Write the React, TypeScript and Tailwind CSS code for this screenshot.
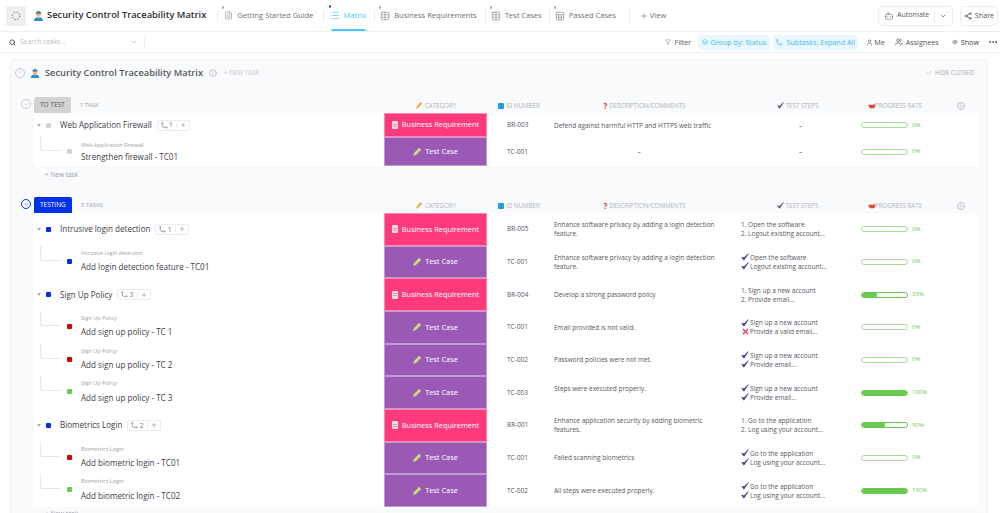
import { ChevronDown, Eye, Filter, Info, Layers, List, MoreHorizontal, Plus, Search, Share2, Sheet, FileText, Table, User, Users, Bot, Check, X } from "lucide-react";

type Row = {
  kind: "br" | "tc";
  name: string;
  parent?: string;
  dot: string;
  subs?: number;
  id: string;
  desc: string;
  descUp?: boolean;
  steps?: string[];
  marks?: ("ok" | "no")[];
  pct: number;
};

const toTest: Row[] = [
  { kind: "br", name: "Web Application Firewall", dot: "bg-[#d3d3d3]", subs: 1, id: "BR-003", desc: "Defend against harmful HTTP and HTTPS web traffic", pct: 0 },
  { kind: "tc", name: "Strengthen firewall - TC01", parent: "Web Application Firewall", dot: "bg-[#d3d3d3]", id: "TC-001", desc: "", pct: 0 },
];

const testing: Row[] = [
  { kind: "br", name: "Intrusive login detection", dot: "bg-[#0231e8]", subs: 1, id: "BR-005", desc: "Enhance software privacy by adding a login detection feature.", steps: ["1. Open the software", "2. Logout existing account..."], pct: 0 },
  { kind: "tc", name: "Add login detection feature - TC01", parent: "Intrusive login detection", dot: "bg-[#0231e8]", id: "TC-001", desc: "Enhance software privacy by adding a login detection feature.", steps: ["Open the software", "Logout existing account..."], marks: ["ok", "ok"], pct: 0 },
  { kind: "br", name: "Sign Up Policy", dot: "bg-[#0231e8]", subs: 3, id: "BR-004", desc: "Develop a strong password policy", steps: ["1. Sign up a new account", "2. Provide email..."], pct: 33 },
  { kind: "tc", name: "Add sign up policy - TC 1", parent: "Sign Up Policy", dot: "bg-[#d40000]", id: "TC-001", desc: "Email provided is not valid.", steps: ["Sign up a new account", "Provide a valid email..."], marks: ["ok", "no"], pct: 0 },
  { kind: "tc", name: "Add sign up policy - TC 2", parent: "Sign Up Policy", dot: "bg-[#d40000]", id: "TC-002", desc: "Password policies were not met.", steps: ["Sign up a new account", "Provide email..."], marks: ["ok", "ok"], pct: 0 },
  { kind: "tc", name: "Add sign up policy - TC 3", parent: "Sign Up Policy", dot: "bg-[#6bc950]", id: "TC-003", desc: "Steps were executed properly.", descUp: true, steps: ["Sign up a new account", "Provide email..."], marks: ["ok", "ok"], pct: 100 },
  { kind: "br", name: "Biometrics Login", dot: "bg-[#0231e8]", subs: 2, id: "BR-001", desc: "Enhance application security by adding biometric features.", steps: ["1. Go to the application", "2. Log using your account..."], pct: 50 },
  { kind: "tc", name: "Add biometric login - TC01", parent: "Biometrics Login", dot: "bg-[#d40000]", id: "TC-001", desc: "Failed scanning biometrics", steps: ["Go to the application", "Log using your account..."], marks: ["ok", "ok"], pct: 0 },
  { kind: "tc", name: "Add biometric login - TC02", parent: "Biometrics Login", dot: "bg-[#6bc950]", id: "TC-002", desc: "All steps were executed properly.", steps: ["Go to the application", "Log using your account..."], marks: ["ok", "ok"], pct: 100 },
];

function Guard({ size = 12 }: { size?: number }) {
  return (
    <svg width={size} height={size} viewBox="0 0 12 12">
      <path d="M1 12c0-3 2-4.500 5-4.500s5 1.500 5 4.500z" fill="#2a8fd0" />
      <circle cx="6" cy="5" r="2.600" fill="#f4b982" />
      <path d="M2.800 3.200 6 .6l3.200 2.600-.6 1H3.400z" fill="#22699f" />
      <rect x="5.300" y="1.800" width="1.400" height="1" fill="#ffcc4d" />
      <rect x="4.500" y="7.500" width="3" height="1.200" fill="#f4b982" />
    </svg>
  );
}

function SubIcon({ size = 7, className }: { size?: number; className?: string }) {
  return (
    <svg width={size} height={size} viewBox="0 0 8 8" fill="none" stroke="currentColor" strokeWidth="0.800" className={className}>
      <circle cx="1.500" cy="1.200" r="0.800" />
      <path d="M1.500 2v2.200a2 2 0 0 0 2 2H5" />
      <circle cx="6.200" cy="6.200" r="0.900" />
    </svg>
  );
}

function Tab({ icon, label, active }: { icon: React.ReactNode; label: string; active?: boolean }) {
  return (
    <div className={`relative flex h-full items-center gap-[2px] ${active ? "text-[#49ccf9]" : "text-[#6b6f76]"}`}>
      <span className="relative flex w-[14px] justify-center">
        <span className={`absolute top-[-5px] left-[1px] h-[3px] w-[2px] rounded-[1px] ${active ? "bg-[#1b6fd1]" : "bg-[#a9adb4]"}`} />
        {icon}
      </span>
      <span className="text-[7.550px] whitespace-nowrap">{label}</span>
      {active && <span className="absolute bottom-0 left-[3px] right-0 h-[2px] rounded-t bg-[#49ccf9]" />}
    </div>
  );
}

function Sep() {
  return <span className="block h-[12px] w-px bg-[#e9ebf0]" />;
}

function TopBar() {
  return (
    <div className="flex h-[32px] items-center border-b border-[#eceef1] bg-white pl-[6px] pr-[2px]">
      <div className="flex h-[20px] w-[20px] items-center justify-center rounded-[3px] bg-[#eeeeee]">
        <svg width="10" height="10" viewBox="0 0 10 10" fill="none">
          <circle cx="5" cy="5" r="3.800" stroke="#666" strokeWidth="0.800" strokeDasharray="1.600 1.400" />
        </svg>
      </div>
      <span className="ml-[7px]"><Guard size={11} /></span>
      <span className="ml-[3px] text-[9.350px] font-semibold whitespace-nowrap text-[#2a2e34]">Security Control Traceability Matrix</span>
      <div className="ml-[11px] flex h-full items-center"><Sep /></div>
      <div className="ml-[3px] flex h-full items-center">
        <Tab icon={<FileText size={9} strokeWidth={1.200} />} label="Getting Started Guide" />
        <div className="ml-[9px] mr-[4px]"><Sep /></div>
        <Tab active icon={<List size={11} strokeWidth={1.500} />} label="Matrix" />
        <div className="ml-[8px] mr-[3px]"><Sep /></div>
        <Tab icon={<Table size={10} strokeWidth={1.200} />} label="Business Requirements" />
        <div className="ml-[8px] mr-[3px]"><Sep /></div>
        <Tab icon={<Table size={10} strokeWidth={1.200} />} label="Test Cases" />
        <div className="ml-[7px] mr-[3px]"><Sep /></div>
        <Tab icon={<Sheet size={10} strokeWidth={1.200} />} label="Passed Cases" />
        <div className="ml-[13px] mr-[10px]"><Sep /></div>
        <Plus size={8} strokeWidth={1.500} className="text-[#6b6f76]" />
        <span className="ml-[2px] text-[7.550px] text-[#6b6f76]">View</span>
      </div>
      <div className="ml-auto flex items-center gap-[7px]">
        <div className="flex h-[20px] w-[75px] items-center rounded-[5px] border border-[#e9ebf0] pl-[5px] text-[#53575e]">
          <Bot size={10} strokeWidth={1.200} />
          <span className="ml-[3px] text-[7px]">Automate</span>
          <span className="ml-[5px] h-[12px] w-px bg-[#e9ebf0]" />
          <ChevronDown size={8} className="ml-[4px]" />
        </div>
        <div className="flex h-[20px] w-[38px] items-center justify-center gap-[3px] rounded-[5px] border border-[#e9ebf0] text-[#53575e]">
          <Share2 size={8} />
          <span className="text-[7.200px]">Share</span>
        </div>
      </div>
    </div>
  );
}

function Toolbar() {
  return (
    <div className="flex h-[21px] items-center border-b border-[#eceef1] bg-white pl-[9px] pr-[2px] text-[7.200px] text-[#53575e]">
      <Search size={7} strokeWidth={2.500} className="text-[#333]" />
      <span className="ml-[4px] w-[110px] text-[6.900px] text-[#b9bec7]">Search tasks...</span>
      <ChevronDown size={8} className="text-[#9a9fa8]" />
      <span className="ml-[6px] h-[10px] w-px bg-[#e9ebf0]" />
      <div className="ml-auto flex items-center">
        <Filter size={6} className="text-[#888]" />
        <span className="ml-[3px]">Filter</span>
        <div className="ml-[7px] flex h-[15px] w-[72px] items-center justify-center gap-[2px] rounded-[3px] bg-[#e8f8fe] text-[#49b9e9]">
          <Layers size={6} />
          <span className="whitespace-nowrap">Group by: Status</span>
        </div>
        <div className="ml-[3px] flex h-[15px] w-[85px] items-center justify-center gap-[3px] rounded-[3px] bg-[#e8f8fe] text-[#49b9e9]">
          <SubIcon size={7} />
          <span className="whitespace-nowrap">Subtasks: Expand All</span>
        </div>
        <User size={7} className="ml-[8px]" />
        <span className="ml-[1px]">Me</span>
        <span className="mx-[4px] text-[#c5c8ce]">·</span>
        <Users size={8} />
        <span className="ml-[3px]">Assignees</span>
        <Eye size={6} className="ml-[13px]" />
        <span className="ml-[3px] text-[#444]">Show</span>
        <MoreHorizontal size={10} className="ml-[9px] text-[#333]" />
      </div>
    </div>
  );
}

function Circle({ blue }: { blue?: boolean }) {
  return (
    <span className={`flex h-[10px] w-[10px] items-center justify-center rounded-full border ${blue ? "border-[#0231e8] text-[#0231e8]" : "border-[#c5c8ce] text-[#b0b4bb]"}`}>
      <ChevronDown size={7} strokeWidth={1.500} />
    </span>
  );
}

function CheckMark({ size = 8 }: { size?: number }) {
  return (
    <svg width={size} height={size} viewBox="0 0 8 8">
      <path d="M.8 4.300 2.900 7.200 7.300.6 3 4.800z" fill="#4b3b8f" stroke="#4b3b8f" strokeWidth="0.700" strokeLinejoin="round" />
    </svg>
  );
}

function HeadIcon({ which }: { which: "cat" | "id" | "q" | "check" | "rate" }) {
  if (which === "cat") return <svg width="7" height="7" viewBox="0 0 8 8"><path d="M5 0 7 2 3 6 0 8l1-3z" fill="#f2a33a" /></svg>;
  if (which === "id") return <span className="h-[6px] w-[6px] rounded-[1px] bg-[#1f9be0]" />;
  if (which === "q") return <span className="text-[8px] leading-none font-bold text-[#d9342b]">?</span>;
  if (which === "check") return <CheckMark size={7} />;
  return <svg width="7" height="6" viewBox="0 0 8 7"><path d="M0 2h6l2-1v3L7 6H2z" fill="#e2453c" /></svg>;
}

function GroupHeader({ label, count, badge, blue }: { label: string; count: string; badge: string; blue?: boolean }) {
  return (
    <div className="grid h-[18px] grid-cols-[350px_103px_67px_187px_120px_117px] items-center pt-[2px] text-[6.200px] text-[#aeb3bb] uppercase">
      <div className="relative flex h-[16px] items-center">
        <span className="absolute left-[-13px] top-[2px]"><Circle blue={blue} /></span>
        <span className={`flex h-[16px] items-center rounded-t-[2px] px-[6px] text-[6.500px] ${badge}`}>{label}</span>
        <span className="ml-[9px] text-[6px] text-[#9a9fa8]">{count}</span>
      </div>
      <div className="flex translate-y-px items-center justify-center gap-[2px] pl-[1px]"><HeadIcon which="cat" />Category</div>
      <div className="flex translate-y-px items-center gap-[2px] pl-[11px] whitespace-nowrap"><HeadIcon which="id" />ID Number</div>
      <div className="flex translate-y-px items-center justify-center gap-[2px] whitespace-nowrap pr-[6px]"><HeadIcon which="q" />Description/Comments</div>
      <div className="flex translate-y-px items-center justify-center gap-[2px] whitespace-nowrap pr-[7px]"><HeadIcon which="check" />Test Steps</div>
      <div className="flex translate-y-px items-center whitespace-nowrap pl-[7px]"><HeadIcon which="rate" />Progress Rate
        <span className="ml-[35px] flex h-[8px] w-[8px] shrink-0 items-center justify-center rounded-full border border-[#b9bec7] text-[#b9bec7]"><Plus size={6} /></span>
      </div>
    </div>
  );
}

function TaskRow({ row, tall, short }: { row: Row; tall?: boolean; short?: boolean }) {
  const isBr = row.kind === "br";
  const h = short ? "h-[24px]" : tall ? "h-[29px]" : "h-[32.670px]";
  return (
    <div className={`grid grid-cols-[350px_103px_67px_187px_120px_117px] items-center bg-white text-[#53575e] ${h} ${isBr ? "shadow-[0_1px_2px_rgba(0,0,0,0.04)]" : ""}`}>
      {isBr ? (
        <div className="flex items-center pl-[3px]">
          <span className="h-0 w-0 border-x-[2.500px] border-t-[3px] border-x-transparent border-t-[#a9adb4]" />
          <span className={`ml-[5px] h-[5px] w-[5px] rounded-[1px] ${row.dot}`} />
          <span className="ml-[9px] text-[8.050px] whitespace-nowrap text-[#3c4046]">{row.name}</span>
          <span className="ml-[5px] flex h-[11px] items-center rounded-[2px] border border-[#e9ebf0] px-[3px] text-[7.500px] text-[#7c828d]">
            <SubIcon size={7} />
            <span className="ml-[1px]">{row.subs}</span>
            <span className="mx-[3px] h-[7px] w-px bg-[#e9ebf0]" />
            <Plus size={6} />
          </span>
        </div>
      ) : (
        <div className="flex h-full items-start">
          <span className={`ml-[6px] w-[21px] rounded-bl-[3px] border-b border-l border-[#e4e6ea] ${tall ? "h-[14px]" : "h-[15px]"}`} />
          <span className={`ml-[6px] h-[5px] w-[5px] rounded-[1px] ${row.dot} ${tall ? "mt-[12px]" : "mt-[13px]"}`} />
          <div className={`ml-[9px] flex flex-col ${tall ? "pt-[4px]" : "pt-[3px]"}`}>
            <span className="text-[5.500px] leading-[8px] whitespace-nowrap text-[#9a9fa8]">{row.parent}</span>
            <span className={`text-[8.100px] leading-[11px] whitespace-nowrap text-[#3c4046] ${tall ? "mt-[2px]" : "mt-[4.500px]"}`}>{row.name}</span>
          </div>
        </div>
      )}
      <div className={`flex h-full items-center justify-center gap-[4px] border border-white/40 text-[7.400px] text-white ${isBr ? "bg-[#fd3b7c]" : "bg-[#9b59b6]"}`}>
        {isBr ? (
          <span className="flex h-[8px] w-[6px] flex-col justify-center gap-px rounded-[1px] bg-[#f3dbe3] px-px">
            <span className="h-px bg-[#c9a3b3]" />
            <span className="h-px bg-[#c9a3b3]" />
          </span>
        ) : (
          <svg width="8" height="8" viewBox="0 0 8 8"><path d="M6 0 8 2 3 7 0 8l1-3z" fill="#c4e36a" /><path d="M6 0 8 2 7 3 5 1z" fill="#f0c98a" /></svg>
        )}
        <span className="whitespace-nowrap">{isBr ? "Business Requirement" : "Test Case"}</span>
      </div>
      <div className="pl-[20px] text-[6.500px]">{row.id}</div>
      <div className={`pr-[14px] text-[6.500px] leading-[9px] text-[#53575e] ${row.descUp ? "pb-[8px]" : ""}`}>
        {row.desc || <div className="pr-[3px] text-center">–</div>}
      </div>
      <div className="text-[6.500px] leading-[9px]">
        {row.steps ? (
          row.steps.map((s, i) => (
            <div key={s} className="flex items-center whitespace-nowrap">
              {row.marks && (
                <span className="mr-px flex w-[8px] justify-center">
                  {row.marks[i] === "ok" ? <CheckMark /> : <X size={9} strokeWidth={3.500} className="shrink-0 text-[#ee3c64]" />}
                </span>
              )}
              {s}
            </div>
          ))
        ) : (
          <div className="pr-[1px] text-center">–</div>
        )}
      </div>
      <div className="flex items-center">
        <div className={`h-[6px] w-[47px] overflow-hidden rounded-full border ${row.pct === 0 ? "border-[#a9dd9a]" : "border-[#6bc950]"}`}>
          <div className="h-full bg-[#6bc950]" style={{ width: `${row.pct}%` }} />
        </div>
        <span className="ml-[4px] text-[6px] text-[#6bc950]">{row.pct}%</span>
      </div>
    </div>
  );
}

export default function App() {
  return (
    <div className="h-[513px] w-[1000px] overflow-hidden bg-white font-['Open_Sans',sans-serif]">
      <TopBar />
      <Toolbar />
      <div className="mx-[10px] mt-[6px] w-[978px] rounded-t-[3px] border border-[#f0f1f4] bg-[#f9fafc] pl-[23px] pr-[9px]">
        <div className="flex h-[35px] items-start pt-[6px]">
          <div className="flex h-[13px] w-full items-center">
            <span className="ml-[-19px]"><Circle /></span>
            <span className="ml-[5px]"><Guard size={10} /></span>
            <span className="ml-[5px] text-[9.270px] font-semibold whitespace-nowrap text-[#53575e]">Security Control Traceability Matrix</span>
            <Info size={8} className="ml-[6px] text-[#a9adb4]" />
            <span className="ml-[7px] text-[6.200px] text-[#c5c8ce]">+ NEW TASK</span>
            <span className="ml-auto mr-[4px] flex items-center gap-[2px] text-[6.200px] text-[#a9adb4]"><Check size={7} />HIDE CLOSED</span>
          </div>
        </div>
        <GroupHeader label="TO TEST" count="1 TASK" badge="bg-[#d3d3d3] text-[#53575e]" />
        <TaskRow row={toTest[0]} short />
        <TaskRow row={toTest[1]} tall />
        <div className="flex h-[18px] items-center pl-[11px] text-[6.500px] text-[#9a9fa8]">+ New task</div>
        <div className="h-[11px]" />
        <GroupHeader label="TESTING" count="3 TASKS" badge="bg-[#0231e8] text-white" blue />
        {testing.map((r) => (
          <TaskRow key={r.name} row={r} />
        ))}
        <div className="flex h-[14px] items-center pl-[11px] text-[6.500px] text-[#9a9fa8]">+ New task</div>
      </div>
    </div>
  );
}
